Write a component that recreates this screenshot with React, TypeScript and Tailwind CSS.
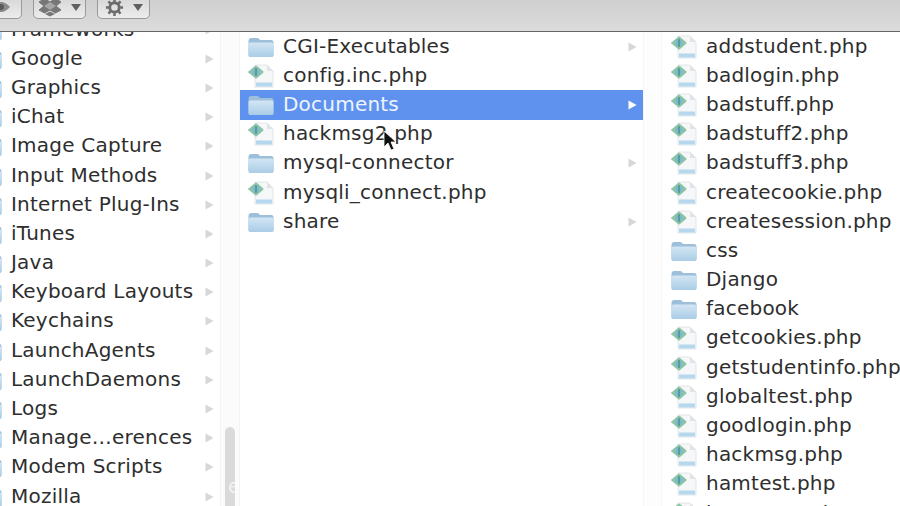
// Finder column view, cropped: toolbar on top, three file columns below.

type Entry = { name: string; kind: "folder" | "php"; arrow?: boolean; selected?: boolean };

const systemLibrary: Entry[] = [
  "Frameworks",
  "Google",
  "Graphics",
  "iChat",
  "Image Capture",
  "Input Methods",
  "Internet Plug-Ins",
  "iTunes",
  "Java",
  "Keyboard Layouts",
  "Keychains",
  "LaunchAgents",
  "LaunchDaemons",
  "Logs",
  "Manage…erences",
  "Modem Scripts",
  "Mozilla",
].map((name) => ({ name, kind: "folder", arrow: true }));

const webServer: Entry[] = [
  { name: "CGI-Executables", kind: "folder", arrow: true },
  { name: "config.inc.php", kind: "php" },
  { name: "Documents", kind: "folder", arrow: true, selected: true },
  { name: "hackmsg2.php", kind: "php" },
  { name: "mysql-connector", kind: "folder", arrow: true },
  { name: "mysqli_connect.php", kind: "php" },
  { name: "share", kind: "folder", arrow: true },
];

const documents: Entry[] = [
  { name: "addstudent.php", kind: "php" },
  { name: "badlogin.php", kind: "php" },
  { name: "badstuff.php", kind: "php" },
  { name: "badstuff2.php", kind: "php" },
  { name: "badstuff3.php", kind: "php" },
  { name: "createcookie.php", kind: "php" },
  { name: "createsession.php", kind: "php" },
  { name: "css", kind: "folder" },
  { name: "Django", kind: "folder" },
  { name: "facebook", kind: "folder" },
  { name: "getcookies.php", kind: "php" },
  { name: "getstudentinfo.php", kind: "php" },
  { name: "globaltest.php", kind: "php" },
  { name: "goodlogin.php", kind: "php" },
  { name: "hackmsg.php", kind: "php" },
  { name: "hamtest.php", kind: "php" },
  { name: "hamtest2.php", kind: "php" },
];

function FolderIcon() {
  return (
    <svg viewBox="0 0 28 22" className="h-[22px] w-[28px] shrink-0">
      <defs>
        <linearGradient id="folder-front" x1="0" y1="0" x2="0" y2="1">
          <stop offset="0" stopColor="#d3e6f4" />
          <stop offset="1" stopColor="#a9cce6" />
        </linearGradient>
      </defs>
      <path d="M1.5 5 Q1.5 2 4.5 2 H10 Q12 2 13 4 H24 Q26.5 4 26.5 6 V19 Q26.5 21 24.5 21 H3.5 Q1.5 21 1.5 19 Z" fill="#9dbfd9" />
      <path d="M1.5 8 Q1.5 6.5 3.5 6.5 H24.5 Q26.5 6.5 26.5 8 V19 Q26.5 21 24.5 21 H3.5 Q1.5 21 1.5 19 Z" fill="url(#folder-front)" />
    </svg>
  );
}

function PhpIcon() {
  return (
    <svg viewBox="0 0 28 24" className="h-[24px] w-[28px] shrink-0">
      <path d="M8 1 H20 L26 7 V23 H8 Z" fill="#f6f7f8" stroke="#dcdfe2" strokeWidth="0.8" />
      <path d="M20 1 V7 H26 Z" fill="#e1e4e6" />
      <rect x="9" y="18.5" width="16" height="4" fill="#b5d8ee" />
      <path d="M1 8 Q1 7.5 2 7 L8 2 Q9 1 10 2 L16 7 Q17 8 16 9 L10 14 Q9 15 8 14 L2 9 Q1 8.5 1 8 Z" fill="#8cc5a6" />
      <circle cx="9" cy="8" r="3.4" fill="#7db8cf" />
      <path d="M9 4 V12" stroke="#3d8a78" strokeWidth="1.2" />
    </svg>
  );
}

function Arrow({ selected }: { selected?: boolean }) {
  return (
    <svg viewBox="0 0 9 10" className="h-[10px] w-[9px] shrink-0">
      <path d="M0.5 0.5 L8.5 5 L0.5 9.5 Z" fill={selected ? "#ffffff" : "#d6d7d9"} />
    </svg>
  );
}

function Row({ entry, arrowClass }: { entry: Entry; arrowClass: string }) {
  return (
    <div
      className={`flex h-[29.2px] items-center whitespace-nowrap ${
        entry.selected ? "bg-[#5f92ef] text-[#eef4ff]" : "text-[#2e2e2e]"
      }`}
    >
      {entry.kind === "folder" ? <FolderIcon /> : <PhpIcon />}
      <span className="mb-[2px] ml-[8px] flex-1 text-[20px] leading-none tracking-[0.22px]">{entry.name}</span>
      {entry.arrow && (
        <span className={arrowClass}>
          <Arrow selected={entry.selected} />
        </span>
      )}
    </div>
  );
}

function ToolButton({ children, className }: { children: React.ReactNode; className: string }) {
  return (
    <div
      className={`flex h-[27px] items-center justify-center gap-[9px] rounded-b-[5px] border border-[#9a9a9a] bg-gradient-to-b from-[#d2d2d2] to-[#ececec] pt-[3px] ${className}`}
    >
      {children}
    </div>
  );
}

function MenuCaret() {
  return (
    <svg viewBox="0 0 10 7" className="h-[7px] w-[10px]">
      <path d="M0 0 H10 L5 7 Z" fill="#5f5f5f" />
    </svg>
  );
}

export default function App() {
  return (
    <div className="relative flex h-[506px] w-[900px] flex-col overflow-hidden bg-white font-['DejaVu_Sans',sans-serif]">
      <header className="z-10 flex h-[32px] shrink-0 items-start gap-[11px] overflow-hidden border-b border-[#666666] bg-gradient-to-b from-[#cfcfcf] to-[#dcdcdc] pt-0">
        <div className="-mt-[8px] flex">
          <ToolButton className="-ml-[30px] w-[52px] justify-start pl-[20px]">
            <svg viewBox="0 0 20 14" className="h-[14px] w-[20px]">
              <path d="M1 7 Q10 -3 19 7 Q10 17 1 7 Z" fill="#8a8a8a" />
              <circle cx="10" cy="7" r="3" fill="#5a5a5a" />
            </svg>
          </ToolButton>
        </div>
        <div className="-mt-[8px] flex">
          <ToolButton className="w-[53px]">
            <svg viewBox="0 0 24 20" className="h-[20px] w-[24px]">
              <path
                d="M6.5 1.5 L12 5 L17.5 1.5 L23 5 L18 9 L23 13 L17.5 16 L12 13 L6.5 16 L1 13 L6 9 L1 5 Z"
                fill="#777777"
                stroke="#777777"
                strokeLinejoin="round"
              />
              <path d="M6 9 L12 5 L18 9 L12 13 Z" fill="#a5a5a5" />
              <path d="M7 17 L12 14.5 L17 17 L12 19.5 Z" fill="#777777" />
            </svg>
            <MenuCaret />
          </ToolButton>
        </div>
        <div className="-mt-[8px] flex">
          <ToolButton className="w-[53px]">
            <svg viewBox="0 0 20 20" className="h-[19px] w-[19px]">
              <circle cx="10" cy="10" r="5" fill="none" stroke="#6b6b6b" strokeWidth="3" />
              <path
                d="M10 1 V4 M10 16 V19 M1 10 H4 M16 10 H19 M3.6 3.6 L5.8 5.8 M14.2 14.2 L16.4 16.4 M3.6 16.4 L5.8 14.2 M14.2 5.8 L16.4 3.6"
                stroke="#6b6b6b"
                strokeWidth="2.6"
              />
            </svg>
            <MenuCaret />
          </ToolButton>
        </div>
      </header>

      <main className="flex min-h-0 flex-1 overflow-hidden">
        <section className="w-[220px] shrink-0 overflow-hidden">
          <div className="-ml-[25px] -mt-[17px] pr-[6px]">
            {systemLibrary.map((entry) => (
              <Row key={entry.name} entry={entry} arrowClass="mr-0" />
            ))}
          </div>
        </section>

        <div className="flex w-[20px] shrink-0 items-end justify-center border-x border-[#f3f3f3] bg-[#fbfbfb]">
          <div className="h-[79px] w-[10px] rounded-t-full bg-[#dadada]" />
        </div>

        <section className="w-[403px] shrink-0 overflow-hidden">
          {webServer.map((entry) => (
            <div key={entry.name} className={entry.selected ? "bg-[#5f92ef] pl-[7px]" : "pl-[7px]"}>
              <Row entry={entry} arrowClass="mr-[6px]" />
            </div>
          ))}
        </section>

        <div className="w-[19px] shrink-0 border-x border-[#f6f6f6] bg-[#fdfdfd]" />

        <section className="flex-1 overflow-hidden pl-[8px]">
          {documents.map((entry) => (
            <Row key={entry.name} entry={entry} arrowClass="mr-0" />
          ))}
        </section>
      </main>

      {/* pointer over hackmsg2.php */}
      <svg viewBox="0 0 14 22" className="absolute left-[383px] top-[130px] h-[22px] w-[14px]">
        <path d="M1 1 V17 L5 13 L8 20 L11 19 L8 12 H13 Z" fill="#111111" stroke="#ffffff" strokeWidth="0.8" />
      </svg>
      <span className="absolute left-[228px] top-[472px] text-[19px] text-white/70">e</span>
    </div>
  );
}
